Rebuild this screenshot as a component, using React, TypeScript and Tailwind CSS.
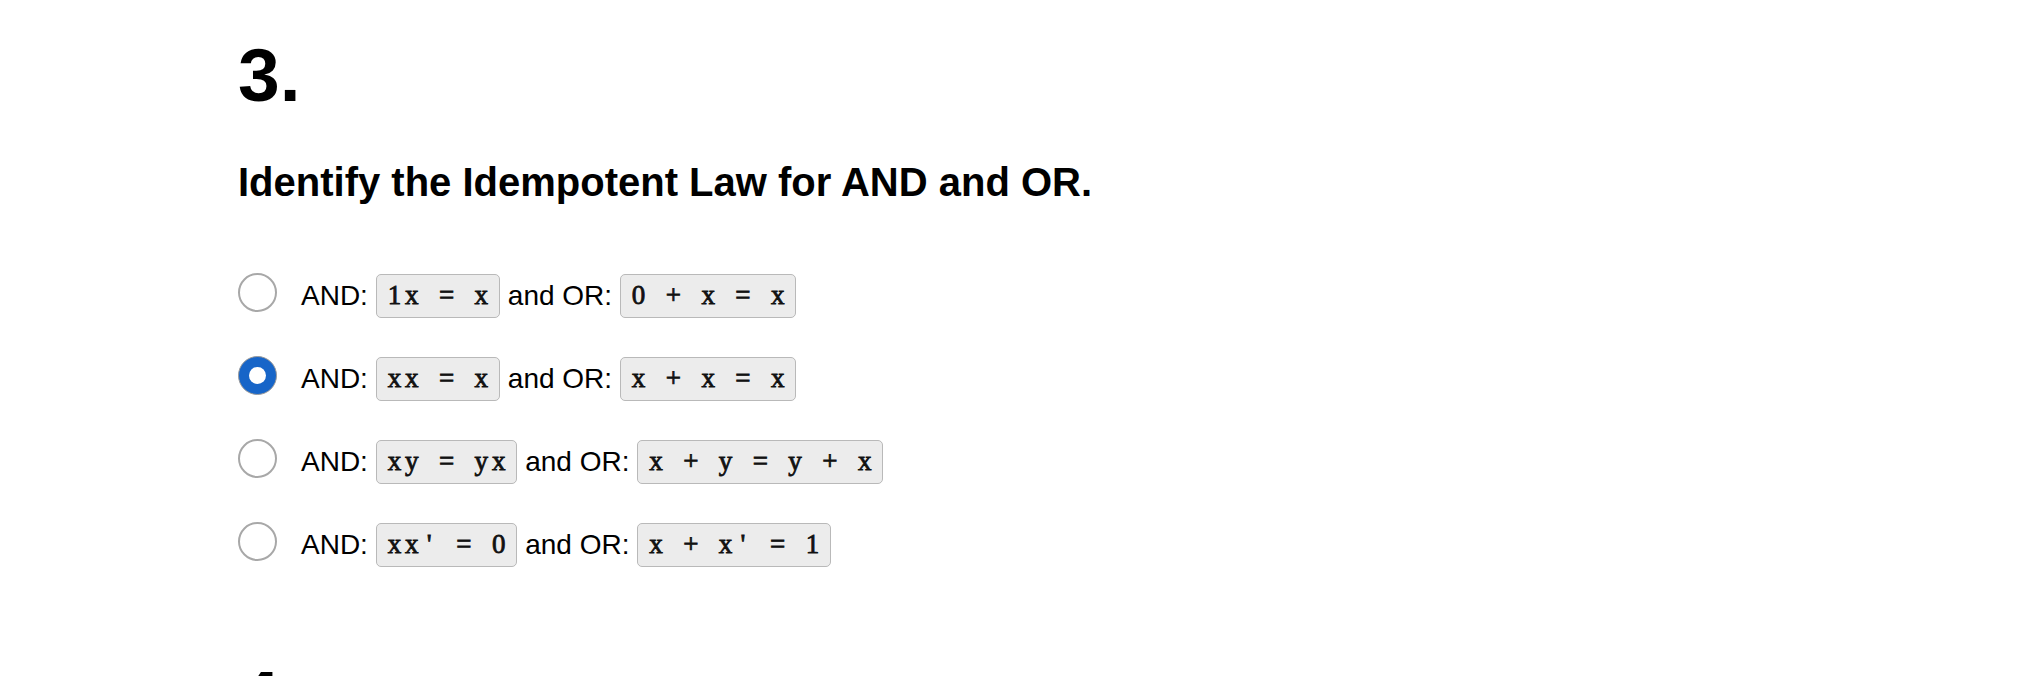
import React from "react";

const options: { and: string; or: string; checked?: boolean }[] = [
  { and: "1x = x", or: "0 + x = x" },
  { and: "xx = x", or: "x + x = x", checked: true },
  { and: "xy = yx", or: "x + y = y + x" },
  { and: "xx' = 0", or: "x + x' = 1" },
];

function Code({ text }: { text: string }) {
  return (
    <code className="inline-flex items-center h-[44px] px-[9px] rounded-[5px] border-[1.5px] border-[#b9b9b9] bg-[#ececec] text-[#111] text-[27px] leading-none whitespace-pre [font-family:'Liberation_Serif','Times_New_Roman',serif] [-webkit-text-stroke:0.8px_#111]">
      {text.split("").map((c, i) => (
        <span key={i} className="inline-block w-[17.4px] text-center">
          {c}
        </span>
      ))}
    </code>
  );
}

function Radio({ checked }: { checked?: boolean }) {
  return checked ? (
    <span className="flex items-center justify-center w-[39px] h-[39px] rounded-full bg-[#1765c8] border-[1.5px] border-[#9a9a9a] mb-[6px] shrink-0">
      <span className="w-[17px] h-[17px] rounded-full bg-white" />
    </span>
  ) : (
    <span className="block w-[39px] h-[39px] rounded-full bg-white border-[2px] border-[#a8a8a8] mb-[6px] shrink-0" />
  );
}

export default function App() {
  return (
    <div className="h-[676px] overflow-hidden bg-white text-black pl-[238px] [font-family:'Liberation_Sans',Arial,sans-serif]">
      <h1 className="pt-[38px] text-[75px] font-bold leading-none">3.</h1>
      <h2 className="mt-[49px] text-[40px] font-bold leading-none">
        Identify the Idempotent Law for AND and OR.
      </h2>
      <div className="mt-[71px] flex flex-col gap-[38px]">
        {options.map((o, i) => (
          <label key={i} className="flex items-center h-[45px] text-[28px] leading-none">
            <Radio checked={o.checked} />
            <span className="ml-[24px] whitespace-pre flex items-center">
              <span>AND: </span>
              <Code text={o.and} />
              <span> and OR: </span>
              <Code text={o.or} />
            </span>
          </label>
        ))}
      </div>
      <h1 className="mt-[93px] text-[75px] font-bold leading-none">4.</h1>
    </div>
  );
}
